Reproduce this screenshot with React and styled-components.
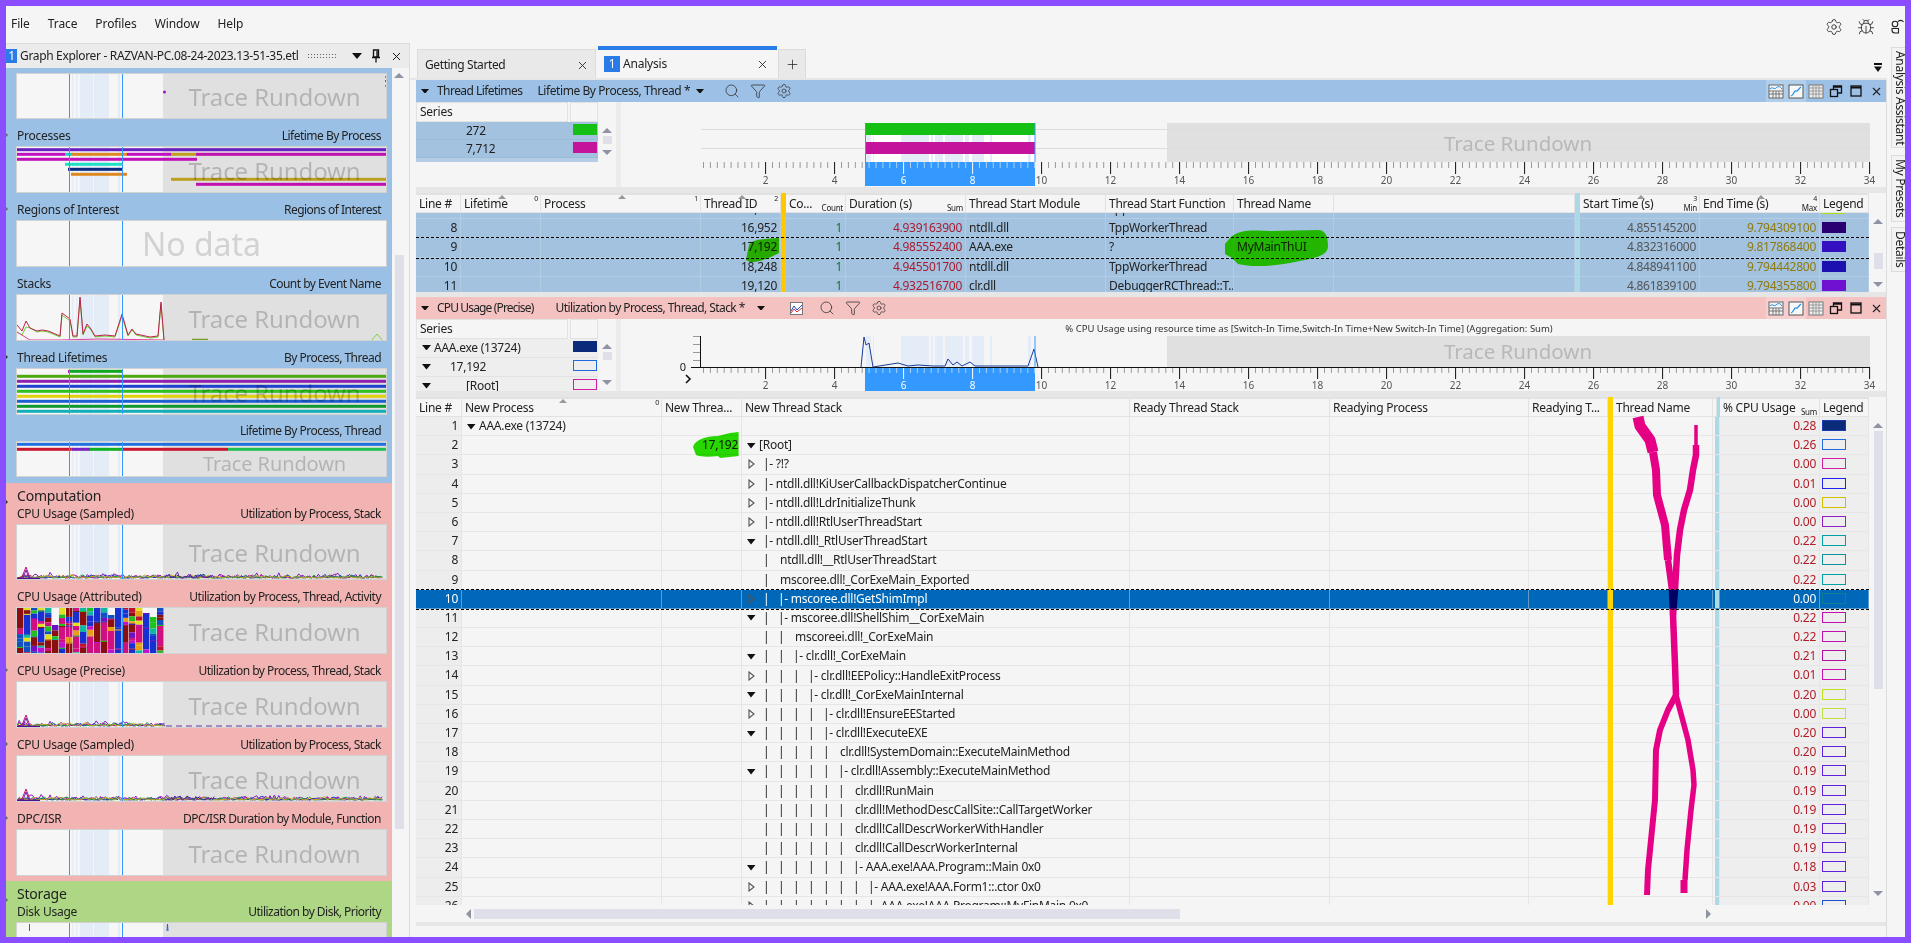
import React from 'react';
import styled, { createGlobalStyle } from 'styled-components';
import { Settings, Bug, Search, Filter, X, Plus } from 'lucide-react';

const Global = createGlobalStyle`
  html, body { margin: 0; padding: 0; background: #f5f5f5; }
  * { box-sizing: border-box; }
`;

const Root = styled.div`
  position: relative;
  width: 1911px; height: 943px;
  border: 6px solid #8a4dff;
  background: #f5f5f5;
  overflow: hidden;
  font: 12px/16px "Noto Sans", "Open Sans", sans-serif;
  letter-spacing: -0.25px;
  color: #222;
  display: flex; flex-direction: column;
`;

const MenuBar = styled.div`
  height: 37px; flex: none;
  display: flex; align-items: center; justify-content: space-between;
  padding: 0 0 2px 5px;
`;
const Menu = styled.div`display: flex; gap: 18px; letter-spacing: -0.1px;`;
const TopIcons = styled.div`display: flex; gap: 14px; margin: 7px -2px 0 0; color: #222; align-items: center;`;

const Body = styled.div`flex: 1; min-height: 0; display: flex;`;

/* left panel */
const LeftPanel = styled.div`
  width: 404px; flex: none; display: flex; flex-direction: column;
  border-right: 1px solid #dcdcdc;
`;
const PanelTitle = styled.div`
  height: 25px; flex: none; background: #ebebeb; border-top: 1px solid #dcdcdc;
  display: flex; align-items: center; font-size: 12px; letter-spacing: -0.33px;
`;
const Badge = styled.span`
  background: #2a7ae8; color: #fff; display: flex; align-items: center; justify-content: center;
  width: ${p => p.$w || 16}px; height: ${p => p.$h || 16}px; flex: none;
`;
const TitleText = styled.span`margin-left: 3px; white-space: nowrap;`;
const Grip = styled.span`
  width: 30px; height: 6px; margin-left: 8px; flex: none;
  background-image: radial-gradient(#666 0.7px, transparent 0.8px);
  background-size: 3px 3px;
`;
const TitleBtns = styled.div`
  margin-left: auto; display: flex; align-items: center; gap: 9px; padding-right: 6px; color: #111;
`;
const PanelBody = styled.div`flex: 1; min-height: 0; display: flex;`;
const List = styled.div`width: 386px; flex: none; overflow: hidden;`;
const Group = styled.div`
  background: ${p => p.$bg};
  padding: ${p => p.$pt}px 0 ${p => p.$pb}px;
`;
const GroupTitle = styled.div`
  font-size: 14px; line-height: 19px; height: 19px; padding-left: 11px; letter-spacing: -0.2px;
`;
const Entry = styled.div`position: relative;`;
const Mark = styled.i`
  position: absolute; left: 0; top: 14px; width: 0; height: 0;
  border-top: 2px solid transparent; border-bottom: 2px solid transparent;
  border-left: 2px solid ${p => p.$c || '#667'};
`;
const EntryLabel = styled.div`
  height: ${p => p.$h}px; display: flex; justify-content: space-between; align-items: flex-end;
  padding: 0 5px 1px 11px; line-height: 18px; white-space: nowrap;
`;
const EntryRight = styled.span`letter-spacing: -0.52px; padding-right: 6px;`;
const Thumb = styled.div`
  position: relative; height: ${p => p.$h}px; margin: 0 5px 0 10px;
  border: 1px solid #d2d2d2; display: flex; overflow: hidden; background: #f6f6f6;
`;
const ThumbGray = styled.div`
  width: 223px; margin-left: auto; background: #e0e0e0;
  display: flex; align-items: center; justify-content: center;
`;
const ThumbEmpty = styled.div`
  flex: 1; display: flex; align-items: center; justify-content: center;
  font-size: 32px; color: #d2d2d2; position: relative; z-index: 2; letter-spacing: 0;
  line-height: 1;
`;
const RundownText = styled.span`
  position: relative; z-index: 2;
  font-size: ${p => p.$s || 24}px; color: rgba(0,0,0,.2); line-height: 1; white-space: nowrap; letter-spacing: -0.1px;
  margin-top: ${p => p.$mt ?? 2}px;
`;
const ThumbPlot = styled.svg`
  position: absolute; left: -1px; top: -1px; z-index: 1; display: block;
`;
const LeftScroll = styled.div`
  flex: 1; display: flex; flex-direction: column; align-items: center; padding-top: 5px; padding-right: 3px;
`;
const ArrowUp = styled.i`
  display: block; width: 0; height: 0; flex: none;
  border-left: 5px solid transparent; border-right: 5px solid transparent;
  border-bottom: 5px solid #8f93a3;
`;
const ArrowDown = styled(ArrowUp)`
  border-bottom: 0; border-top: 5px solid #8f93a3; margin-top: ${p => p.$mt}px;
`;
const ArrowLeft = styled.i`
  display: block; width: 0; height: 0; flex: none;
  border-top: 5px solid transparent; border-bottom: 5px solid transparent;
  border-right: 5px solid #8f93a3;
`;
const ArrowRight = styled(ArrowLeft)`
  border-right: 0; border-left: 5px solid #8f93a3;
`;
const VThumb = styled.div`
  flex: none; width: 9px; background: #dedfe8; height: ${p => p.$h}px; margin-top: ${p => p.$mt}px;
`;

/* main */
const Main = styled.div`
  flex: 1; min-width: 0; display: flex; flex-direction: column;
`;
const TabStrip = styled.div`
  height: 35px; flex: none; display: flex; align-items: flex-end; padding-left: 7px; gap: 2px;
`;
const Tab = styled.div`
  height: 29px; width: 179px; background: #e9e9e9; border: 1px solid #dcdcdc; border-bottom: 0;
  display: flex; align-items: center; padding: 2px 6px 0 7px; justify-content: space-between; font-size: 12px; letter-spacing: -0.4px;
`;
const ActiveTab = styled.div`
  height: 32px; width: 179px; background: #f5f5f5; border-top: 4px solid #2a7ae8;
  display: flex; align-items: center; padding: 0 8px 0 6px; gap: 3px; letter-spacing: -0.2px;
`;
const PlusTab = styled(Tab)`width: 28px; padding: 0; justify-content: center; margin-left: -1px;`;
const TabClose = styled.span`margin-left: auto; display: flex;`;
const Overflow = styled.div`
  margin-left: auto; margin-right: 1px; align-self: center; padding-top: 16px; width: 12px;
`;
const Rule = styled.div`height: ${p => p.$h}px; flex: none; background: #e6e6e6;`;
const Analysis = styled.div`
  flex: 1; min-height: 0; display: flex; flex-direction: column; padding-left: 6px;
  border-right: 1px solid #dddddd;
`;
const PaneHeader = styled.div`
  height: 22px; flex: none; background: ${p => p.$bg};
  display: flex; align-items: center; padding-left: 5px;
`;
const PaneTitle = styled.span`margin-left: 8px; white-space: nowrap; letter-spacing: ${p => p.$ls}px;`;
const PaneSub = styled.span`margin-left: ${p => p.$ml}px; white-space: nowrap; letter-spacing: ${p => p.$ls}px;`;
const Dropdown = styled.span`margin-left: ${p => p.$ml}px; display: flex;`;
const HeaderTools = styled.div`
  display: flex; align-items: center; margin-left: ${p => p.$ml}px; gap: 10px; color: #333;
`;
const ChartTool = styled.span`display: flex; margin-right: 6px;`;
const HeaderRight = styled.div`margin-left: auto; display: flex; height: 100%;`;
const HeaderBtn = styled.div`
  width: 20px; height: 100%; display: flex; align-items: center; justify-content: center;
  background: ${p => p.$on ? 'rgba(255,255,255,.22)' : 'transparent'};
`;
const ChartRow = styled.div`
  height: ${p => p.$h}px; flex: none; display: flex; overflow: hidden;
`;
const SeriesBox = styled.div`width: 182px; flex: none; overflow: hidden; position: relative;`;
const SeriesHead = styled.div`
  display: grid; grid-template-columns: 152px 2px 28px; height: 20px; line-height: 18px;
`;
const SeriesHeadCell = styled.div`background: #f5f5f5; border: 1px solid #e2e2e2; padding-left: 3px;`;
const SeriesRow = styled.div`
  display: grid; grid-template-columns: 154px 28px; height: ${p => p.$h || 19.2}px;
  background: ${p => p.$sel ? '#a2c2df' : '#eeeeee'};
  border-bottom: 1px solid ${p => p.$sel ? '#9bbcd9' : '#e2e2e2'};
`;
const SeriesName = styled.div`
  display: flex; align-items: center; padding-left: ${p => p.$pl}px; position: relative; white-space: nowrap;
`;
const SeriesExp = styled.span`position: absolute; left: 6px; top: 6px; display: flex;`;
const SeriesSwatch = styled.span`
  display: block; margin: 2px 3px; height: 11px; width: 24px; flex: none;
  background: ${p => p.$fill || 'transparent'};
  border: 1px solid ${p => p.$c};
`;
const SeriesTail = styled.div`height: 4px; background: #b3cde4;`;
const MiniScroll = styled.div`
  width: 18px; flex: none; display: flex; flex-direction: column; align-items: center; padding-top: ${p => p.$pt}px;
`;
const Divider = styled.div`width: 5px; flex: none; background: #ececec;`;
const Plot = styled.svg`display: block; flex: none;`;

const TableWrap = styled.div`
  flex: ${p => p.$grow ? 1 : 'none'}; min-height: 0; display: flex; flex-direction: column;
  height: ${p => p.$h ? `${p.$h}px` : 'auto'};
`;
const TableMain = styled.div`flex: 1; min-height: 0; display: flex;`;
const TableCol = styled.div`width: 1453px; flex: none; display: flex; flex-direction: column; min-height: 0;`;
const HeadRow = styled.div`
  height: 20px; flex: none; display: grid; grid-template-columns: ${p => p.$cols};
  font-size: 12px;
`;
const HeadCell = styled.div`
  position: relative; background: #f5f5f5; border: 1px solid #e2e2e2; border-left: 0; border-top: 2px solid #e2e2e2;
  padding-left: 3px; line-height: 17px; white-space: nowrap; overflow: hidden;
`;
const BarCell = styled.div`background: ${p => p.$c};`;
const Caret = styled.i`
  position: absolute; top: 0; left: 50%; margin-left: -3px; width: 0; height: 0;
  border-left: 4px solid transparent; border-right: 4px solid transparent; border-bottom: 4px solid #999;
`;
const SortNo = styled.span`position: absolute; top: 0; right: 2px; font-size: 7px; line-height: 8px;`;
const Agg = styled.span`position: absolute; bottom: 0; right: 2px; font-size: 8px; line-height: 9px;`;
const Rows = styled.div`flex: 1; min-height: 0; overflow: hidden;`;
const RowsInner = styled.div`margin-top: ${p => p.$mt || 0}px;`;
const TableRow = styled.div`
  height: 19.2px; display: grid; grid-template-columns: ${p => p.$cols};
  position: relative; line-height: 18px;
  background: ${p => p.$bg || 'transparent'};
  color: ${p => p.$inv ? '#fff' : '#222'};
  ${p => p.$dash ? `
    &::before, &::after { content: ''; position: absolute; left: 0; right: 0; border-top: 1px dashed #000; z-index: 2; }
    &::before { top: -1px; } &::after { bottom: -1px; }
  ` : ''}
`;
const Cell = styled.div`
  border-right: 1px solid ${p => p.$line};
  border-bottom: 1px solid ${p => p.$line};
  padding: 0 ${p => p.$tight ? 0 : 3}px 0 3px; white-space: nowrap; overflow: hidden;
  text-align: ${p => p.$right ? 'right' : 'left'};
  color: ${p => p.$c || 'inherit'};
  background: ${p => p.$bg || 'transparent'};
  display: ${p => p.$flex ? 'flex' : 'block'};
  align-items: center;
  position: relative;
`;
const LegendSwatch = styled.span`
  display: block; width: 24px; height: 11px; margin: 3px 0 0 -1px;
  background: ${p => p.$fill || 'transparent'};
  border: 1px solid ${p => p.$c};
`;
const Guide = styled.span`display: inline-block; width: 15px; flex: none;`;
const TreeGutter = styled.span`width: 18px; flex: none; display: flex; align-items: center; padding-left: ${p => p.$closed ? 3 : 1}px;`;
const Dashed = styled.span`white-space: pre;`;
const PlainNode = styled.span`margin-left: 2px;`;
const RootNode = styled.span`margin-left: -4px;`;
const NameExp = styled.span`display: inline-flex; margin: 0 3px 0 1px;`;
const HBar = styled.div`
  height: 17px; flex: none; display: flex; align-items: center; padding-left: 50px; width: 1295px;
`;
const HThumb = styled.div`width: 706px; height: 10px; background: #dedfe8; margin-left: 3px;`;
const HEnd = styled.div`margin-left: auto;`;
const BottomPad = styled.div`flex: none; height: 11px;`;

const Rail = styled.div`width: 18px; flex: none; padding-top: 4px; display: flex; flex-direction: column; overflow: hidden;`;
const RailTab = styled.div`
  writing-mode: vertical-rl; height: ${p => p.$h}px; width: 18px; margin: 0 0 ${p => p.$mb}px 4px; flex: none;
  background: #f3f3f3; border: 1px solid #dcdcdc; border-right: 0;
  line-height: 17px; padding-top: 3px; white-space: nowrap; letter-spacing: -0.3px; overflow: hidden;
`;
const Scribble = styled.svg`
  position: absolute; left: 0; top: 0; z-index: 5; pointer-events: none; mix-blend-mode: multiply;
`;
const SvgText = styled.text`font-family: "Noto Sans", sans-serif; letter-spacing: 0;`;

/* ---- icons ---- */
const Tri = ({ s = 9, c = '#111' }) => (
  <svg width={s} height={s * 0.6} viewBox="0 0 10 6"><path d="M0 0H10L5 6Z" fill={c} /></svg>
);
const Open = () => <svg width="10" height="7" viewBox="0 0 10 7"><path d="M1 1H9.5L5 6.5Z" fill="#111" /></svg>;
const Closed = () => <svg width="7" height="10" viewBox="0 0 7 10"><path d="M1 1L6 5L1 9Z" fill="none" stroke="#555" strokeWidth="1.1" /></svg>;
const TableChartIcon = ({ accent }) => (
  <svg width="16" height="16" viewBox="0 0 16 16" fill="none">
    <rect x="1" y="2" width="14" height="13" fill="#f4f4f4" stroke="#666" />
    {[8, 11].map(y => <path key={y} d={`M1 ${y}H15`} stroke="#777" />)}
    {[5, 8, 11].map(x => <path key={x} d={`M${x} 8V15`} stroke="#777" />)}
    <path d="M2 6C4 3 6 7 8 5S12 3 14 6" stroke={accent} />
  </svg>
);
const GraphIcon = () => (
  <svg width="16" height="16" viewBox="0 0 16 16" fill="none">
    <rect x="1" y="2" width="14" height="13" fill="#f8f8f8" stroke="#555" />
    <path d="M3 13C6 12 6 7 8 8S11 5 13 4" stroke="#1a8be0" strokeWidth="1.2" />
  </svg>
);
const GridIcon = () => (
  <svg width="16" height="16" viewBox="0 0 16 16" fill="none">
    <rect x="1" y="2" width="14" height="13" fill="#f0f0f0" stroke="#777" />
    {[5, 8, 11].map(y => <path key={y} d={`M1 ${y}H15`} stroke="#999" />)}
    {[5, 8, 11].map(x => <path key={x} d={`M${x} 2V15`} stroke="#999" />)}
  </svg>
);
const RestoreIcon = () => (
  <svg width="14" height="14" viewBox="0 0 14 14" fill="none" stroke="#111" strokeWidth="1.3">
    <rect x="1.5" y="5.5" width="7" height="7" /><path d="M4.5 5.5V2H12.5V9H8.5M4.5 3H12.5" />
  </svg>
);
const MaxIcon = () => (
  <svg width="14" height="14" viewBox="0 0 14 14" fill="none" stroke="#111" strokeWidth="1.3">
    <rect x="2" y="2" width="10" height="10" /><path d="M2 3.5H12" strokeWidth="2" />
  </svg>
);
const CpuChartIcon = () => (
  <svg width="13" height="13" viewBox="0 0 13 13" fill="none">
    <rect x="0.5" y="0.5" width="12" height="12" fill="#fff" stroke="#777" />
    <path d="M1 9L4 4L7 8L12 3" stroke="#2050d0" /><path d="M1 11L4 7L7 10L12 6" stroke="#d03040" />
  </svg>
);
const PinIcon = () => (
  <svg width="10" height="14" viewBox="0 0 10 14" fill="none" stroke="#111" strokeWidth="1.3">
    <path d="M2.5 1H7.5V8H2.5ZM1 8.5H9M5 8.5V13.5M6 2V8" />
  </svg>
);
const FeedbackIcon = () => (
  <svg width="18" height="18" viewBox="0 0 18 18" fill="none" stroke="#222" strokeWidth="1.1">
    <circle cx="6" cy="6" r="2.8" /><path d="M3 10.5H9.5V15H6A3 3 0 0 1 3 12ZM9 3.5C11 2 13 2 14.5 4" />
  </svg>
);
const OverflowIcon = () => (
  <svg width="8" height="10" viewBox="0 0 8 10"><path d="M0 0H8V2H0ZM0 3.5H8L4 9Z" fill="#111" /></svg>
);

/* ---- thumbnail drawings ---- */
const rng = seed => () => (seed = (seed * 16807) % 2147483647) / 2147483647;
const BLUE_LINE = '#3399ff';
const bandsList = [[72, 1.5], [76, 1.5], [80, 13], [94, 14], [103, 6], [118, 2], [90, 1]];

const Bars = ({ rows }) => rows.map((r, i) => (
  <rect key={i} x={r[1]} width={r[2] - r[1]} y={r[0] - 1.5} height="3" fill={r[3]} />
));

const noise = (seed, x0, x1, base, amp, step = 2.2) => {
  const r = rng(seed);
  const p = [];
  for (let x = x0; x < x1; x += step) p.push(`${x.toFixed(1)},${(base - r() * r() * amp).toFixed(1)}`);
  return p.join(' ');
};

const Noise = ({ top, h, x1 = 384, big = true, seed = 11 }) => {
  const base = top + h - 2;
  const colors = ['#8b16c0', '#c010a0', '#2030d0', '#20a040', '#c8b020'];
  return (
    <g fill="none" strokeWidth="1">
      <path d={`M17 ${base - 0.5}H${x1}`} stroke="#5a2a90" strokeWidth="1.2" strokeDasharray="5 3" />
      {colors.map((c, i) => (
        <polyline key={c} points={noise(seed + i * 37, 17, x1, base, i === 0 ? 6 : 4)} stroke={c} />
      ))}
      {big && <polyline points={noise(seed + 3, 165, 215, base, 7, 1.4)} stroke="#5020a0" />}
      <polyline points={`18,${base} 22,${base - 1} 26,${base - 11} 30,${base}`} stroke="#c01070" />
      <polyline points={`19,${base} 23,${base} 26,${base - 8} 29,${base}`} stroke="#7020c0" />
      <path d={`M17 ${base + 0.5}H40`} stroke="#501090" strokeWidth="1.5" />
    </g>
  );
};

const Attributed = () => {
  const r = rng(4242);
  const pal = ['#c010d0', '#1830d0', '#8a1010', '#10b8a0', '#e0e020', '#20c020', '#d01080', '#e8a010', '#c01030', '#7010c0', '#1050c0'];
  const tops = [0, 0, 0, 0, 0, 18, 0, 0, 0, 0, 0, 0, 0, 8, 0, 0, 0, 0, 6, 10, 0];
  const out = [];
  tops.forEach((t, i) => {
    const x = 17 + i * 7.0;
    let y = 609 + t;
    while (y < 656) {
      const big = r() < 0.22;
      const h = big ? 8 + r() * 14 : 2 + r() * 4;
      const c = big ? pal[[1, 2, 2, 1, 6][Math.floor(r() * 5)]] : pal[Math.floor(r() * pal.length)];
      out.push(<rect key={`${i}-${y}`} x={x} y={y} width={6.4} height={Math.min(h, 656 - y)} fill={c} />);
      if (big) out.push(<rect key={`f${i}-${y}`} x={x} y={y} width={6.4} height={1} fill={pal[Math.floor(r() * pal.length)]} />);
      y += h;
    }
  });
  return <g>{out}</g>;
};

const redLine = '17,326 22,332 26,322 30,329 37,332 42,331 48,332 53,334 60,337 62,314 70,320 73,337 77,337 80,298 83,335 87,325 91,330 95,337 105,336 115,337 122,315 128,336 132,330 136,335 150,338 158,337 161,303 164,341';
const greenLine = '17,333 22,336 26,328 30,329 37,333 42,332 48,333 53,335 60,338 62,316 70,322 73,338 77,338 80,300 83,336 87,327 91,331 95,338 105,337 115,338 122,317 128,337 132,331 136,336 150,339 158,338 161,305 164,342';

const drawings = {
  dot: () => (
    <g><circle cx="164.5" cy="92" r="1.6" fill="#9a20c8" />
      <path d="M385.5 76v2" stroke="#c08020" /><path d="M385.5 80v2" stroke="#c04040" /><path d="M385.5 85v2" stroke="#20c0a0" /></g>
  ),
  processes: () => <Bars rows={[
    [150.7, 17, 386, '#6a20c0'],
    [155.3, 17, 65, '#c010c0'], [155.3, 65, 71, '#20d0c0'], [155.3, 71, 127, '#e08820'], [155.3, 127, 171, '#c010c0'], [155.3, 171, 196, '#c0a020'], [155.3, 196, 386, '#c010b0'],
    [160.3, 17, 197, '#c010b8'], [165.3, 65, 122, '#20e0c8'], [170.3, 68, 122, '#0a2a80'], [175.3, 71, 127, '#e08820'],
    [180.3, 171, 386, '#bca020'], [185.3, 196, 386, '#c010b0'],
  ]} />,
  stacks: () => (
    <g fill="none">
      <polyline points={greenLine} stroke="#70d030" />
      <polyline points={redLine} stroke="#c02050" />
      <polyline points="17,333 30,341 60,341 100,340 164,341" stroke="#e040a0" />
      <path d="M192 340.5H208" stroke="#70a020" strokeWidth="1.5" />
      <path d="M372 341L377 335L382 341" stroke="#80d040" />
    </g>
  ),
  threads: () => (
    <g>
      <rect x="68" y="371" width="2" height="3" fill="#c010c0" />
      <Bars rows={[
        [372.3, 70, 122, '#10a820'], [377.3, 17, 386, '#50a810'], [382.3, 17, 386, '#9020b0'], [387.3, 17, 386, '#2040d0'],
        [392.3, 17, 386, '#30c020'], [397.3, 17, 386, '#e0d010'], [402.3, 17, 386, '#2060d0'], [407.3, 17, 386, '#109830'], [412.3, 17, 386, '#10b0b8'],
      ]} />
    </g>
  ),
  lifetime: () => <Bars rows={[
    [445.3, 17, 386, '#2070e0'],
    [450.3, 17, 71, '#c81830'], [450.3, 71, 72, '#10b020'], [450.3, 72, 90, '#7a20c0'], [450.3, 90, 122, '#10b020'], [450.3, 123, 228, '#c81830'], [450.3, 228, 386, '#20c050'],
  ]} />,
  cpu1: (t, h) => <Noise top={t} h={h} seed={101} />,
  cpu2: (t, h) => <Noise top={t} h={h} seed={202} />,
  precise: (t, h) => (
    <g>
      <Noise top={t} h={h} x1={165} big={false} seed={303} />
      <path d={`M166 ${t + h - 2}H382`} stroke="#7030a0" strokeDasharray="6 4" />
    </g>
  ),
  attributed: () => <Attributed />,
  disk: () => (
    <g fill="none" stroke="#3060c0"><path d="M29.5 933V926" /><path d="M167 933L167.5 926L168 933" /></g>
  ),
};

const ThumbView = ({ top, h, kind, empty, rundownSize, rundownMt }) => {
  const draw = kind && drawings[kind];
  return (
    <Thumb $h={h}>
      {empty ? <ThumbEmpty>No data</ThumbEmpty> : (
        <ThumbGray><RundownText $s={rundownSize} $mt={rundownMt}>Trace Rundown</RundownText></ThumbGray>
      )}
      <ThumbPlot width="371" height={h} viewBox={`16 ${top} 371 ${h}`}>
        {!empty && bandsList.map(([x, w]) => <rect key={x} x={x} y={top} width={w} height={h} fill="#e4edf7" />)}
        {draw && draw(top, h)}
        <path d={`M69.5 ${top}V${top + h}M122.5 ${top}V${top + h}`} stroke={BLUE_LINE} />
      </ThumbPlot>
    </Thumb>
  );
};

const blueEntries = [
  { label: 'Processes', right: 'Lifetime By Process', top: 147, h: 47, kind: 'processes', mark: true },
  { label: 'Regions of Interest', right: 'Regions of Interest', top: 221, h: 47, empty: true, mark: true },
  { label: 'Stacks', right: 'Count by Event Name', top: 295, h: 47, kind: 'stacks' },
  { label: 'Thread Lifetimes', right: 'By Process, Thread', top: 369, h: 47, kind: 'threads', mark: '#333' },
  { label: '', right: 'Lifetime By Process, Thread', top: 442, h: 36, kind: 'lifetime', rundownSize: 20, rundownMt: 9, lh: 26 },
];
const pinkEntries = [
  { label: 'CPU Usage (Attributed)', right: 'Utilization by Process, Thread, Activity', top: 609, h: 47, kind: 'attributed' },
  { label: 'CPU Usage (Precise)', right: 'Utilization by Process, Thread, Stack', top: 683, h: 47, kind: 'precise', mark: true },
  { label: 'CPU Usage (Sampled)', right: 'Utilization by Process, Stack', top: 757, h: 47, kind: 'cpu2', mark: true },
  { label: 'DPC/ISR', right: 'DPC/ISR Duration by Module, Function', top: 831, h: 47, mark: true },
];

const EntryView = ({ e }) => (
  <Entry>
    {e.mark && <Mark $c={e.mark === true ? undefined : e.mark} />}
    <EntryLabel $h={e.lh || 27}><span>{e.label}</span><EntryRight>{e.right}</EntryRight></EntryLabel>
    <ThumbView {...e} />
  </Entry>
);

/* ---- plots ---- */
const axisTicks = y => {
  const out = [];
  for (let i = 0; i <= 170; i++) {
    const x = 696.6 + i * 6.9;
    if (x < 701) continue;
    const major = i % 10 === 0;
    const inSel = x > 865 && x < 1035;
    out.push(<path key={i} d={`M${x.toFixed(1)} ${y}V${y + (major ? 12 : 6)}`}
      stroke={major ? (inSel ? '#fff' : '#111') : (inSel ? '#a8d0f8' : '#999')} />);
    if (major) {
      const v = i / 5;
      out.push(<SvgText key={`t${i}`} x={x} y={y + 22} fontSize="10" textAnchor="middle" fill={inSel ? '#fff' : '#555'}>{v}</SvgText>);
    }
  }
  return out;
};
const plotBands = [[866, 5], [873, 1], [901, 28], [931, 2], [935, 8], [945, 18], [965, 4], [972, 12], [990, 2], [1028, 3]];

const LifetimePlot = () => (
  <Plot width="1266" height="85" viewBox="621 102 1266 85">
    <rect x="865" y="123" width="170" height="39" fill="#fff" />
    {plotBands.map(([x, w]) => <rect key={x} x={x} y="123" width={w} height="39" fill="#e4edf7" />)}
    <rect x="1167" y="123" width="703" height="39" fill="#e0e0e0" />
    <path d="M701 129.5H865M1035 129.5H1870M701 148.5H865M1035 148.5H1870" stroke="#dcdcdc" />
    <rect x="865" y="123" width="170" height="12" fill="#14c014" />
    <rect x="865" y="142" width="170" height="12" fill="#c4149c" />
    <path d="M865.5 123V162M1035 123V162" stroke={BLUE_LINE} />
    <rect x="865" y="162" width="170" height="24" fill={BLUE_LINE} />
    {axisTicks(162)}
    <SvgText x="1518" y="151" fontSize="20.5" textAnchor="middle" fill="#b8b8b8">Trace Rundown</SvgText>
  </Plot>
);

const CpuPlot = () => (
  <Plot width="1266" height="72" viewBox="621 319 1266 72">
    <SvgText x="1309" y="332" fontSize="9.5" textAnchor="middle" fill="#333">% CPU Usage using resource time as [Switch-In Time,Switch-In Time+New Switch-In Time] (Aggregation: Sum)</SvgText>
    {plotBands.map(([x, w]) => <rect key={x} x={x} y="336" width={w} height="31" fill="#e4edf7" />)}
    <rect x="1167" y="336" width="703" height="31" fill="#e0e0e0" />
    <SvgText x="1518" y="359" fontSize="20.5" textAnchor="middle" fill="#b8b8b8">Trace Rundown</SvgText>
    <rect x="865" y="367" width="170" height="24" fill={BLUE_LINE} />
    {axisTicks(367)}
    <path d="M691 367.5H1870M700.5 336V367" stroke="#111" />
    <path d="M693 336.5H700M693 344.5H700M693 352.5H700M693 360.5H700" stroke="#999" />
    <SvgText x="683" y="371" fontSize="11" textAnchor="middle" fill="#222">0</SvgText>
    <path d="M686 375L690 379L686 383" fill="none" stroke="#111" strokeWidth="1.6" />
    <polyline fill="none" stroke="#1a3a9a" points="861,367 864,337 866,345 869,343 873,367 898,363 908,366 918,365 933,366 945,366 948,359 953,365 957,362 962,366 970,362 975,366 1028,366 1034,349 1038,367" />
    <path d="M1035 336V367" stroke={BLUE_LINE} />
  </Plot>
);

/* ---- table data ---- */
const LIFE_COLS = '45px 80px 160px 80px 5px 60px 120px 140px 128px 100px 241px 5px 120px 120px 49px';
const CPU_COLS = '46px 200px 80px 388px 200px 199px 79px 5px 100px 2px 5px 100px 49px';
const LINE = '#b2cce4';

const lifeRows = [
  { n: 7, id: '15,908', d: '4.941592200', m: 'ntdll.dll', f: 'TppWorkerThread', s: '4.853354200', e: '9.794947400', c: '#b0e010' },
  { n: 8, id: '16,952', d: '4.939163900', m: 'ntdll.dll', f: 'TppWorkerThread', s: '4.855145200', e: '9.794309100', c: '#2a0070' },
  { n: 9, id: '17,192', d: '4.985552400', m: 'AAA.exe', f: '?', name: 'MyMainThUI', s: '4.832316000', e: '9.817868400', c: '#3410c0', dash: true },
  { n: 10, id: '18,248', d: '4.945501700', m: 'ntdll.dll', f: 'TppWorkerThread', s: '4.848941100', e: '9.794442800', c: '#1c10b0' },
  { n: 11, id: '19,120', d: '4.932516700', m: 'clr.dll', f: 'DebuggerRCThread::T...', s: '4.861839100', e: '9.794355800', c: '#7010d0' },
];

const stack = [
  { g: 0, root: true, exp: 'open', t: '[Root]', v: '0.26', c: '#1e6ae0' },
  { g: 0, dash: 1, exp: 'closed', t: '?!?', v: '0.00', c: '#d020a0' },
  { g: 0, dash: 1, exp: 'closed', t: 'ntdll.dll!KiUserCallbackDispatcherContinue', v: '0.01', c: '#2020f0' },
  { g: 0, dash: 1, exp: 'closed', t: 'ntdll.dll!LdrInitializeThunk', v: '0.00', c: '#d0c000' },
  { g: 0, dash: 1, exp: 'closed', t: 'ntdll.dll!RtlUserThreadStart', v: '0.00', c: '#9020c0' },
  { g: 0, dash: 1, exp: 'open', t: 'ntdll.dll!_RtlUserThreadStart', v: '0.22', c: '#00a0a8' },
  { g: 1, t: 'ntdll.dll!__RtlUserThreadStart', v: '0.22', c: '#109098' },
  { g: 1, t: 'mscoree.dll!_CorExeMain_Exported', v: '0.22', c: '#00a0a8' },
  { g: 1, dash: 1, exp: 'closed', t: 'mscoree.dll!GetShimImpl', v: '0.00', c: '#108090', sel: true },
  { g: 1, dash: 1, exp: 'open', t: 'mscoree.dll!ShellShim__CorExeMain', v: '0.22', c: '#c010b0' },
  { g: 2, t: 'mscoreei.dll!_CorExeMain', v: '0.22', c: '#c010b0' },
  { g: 2, dash: 1, exp: 'open', t: 'clr.dll!_CorExeMain', v: '0.21', c: '#b010a0' },
  { g: 3, dash: 1, exp: 'closed', t: 'clr.dll!EEPolicy::HandleExitProcess', v: '0.01', c: '#c810b0' },
  { g: 3, dash: 1, exp: 'open', t: 'clr.dll!_CorExeMainInternal', v: '0.20', c: '#c0e020' },
  { g: 4, dash: 1, exp: 'closed', t: 'clr.dll!EnsureEEStarted', v: '0.00', c: '#c0e040' },
  { g: 4, dash: 1, exp: 'open', t: 'clr.dll!ExecuteEXE', v: '0.20', c: '#6020e0' },
  { g: 5, t: 'clr.dll!SystemDomain::ExecuteMainMethod', v: '0.20', c: '#6020e0' },
  { g: 5, dash: 1, exp: 'open', t: 'clr.dll!Assembly::ExecuteMainMethod', v: '0.19', c: '#6020e0' },
  { g: 6, t: 'clr.dll!RunMain', v: '0.19', c: '#6020e0' },
  { g: 6, t: 'clr.dll!MethodDescCallSite::CallTargetWorker', v: '0.19', c: '#6020e0' },
  { g: 6, t: 'clr.dll!CallDescrWorkerWithHandler', v: '0.19', c: '#6020e0' },
  { g: 6, t: 'clr.dll!CallDescrWorkerInternal', v: '0.19', c: '#6020e0' },
  { g: 6, dash: 1, exp: 'open', t: 'AAA.exe!AAA.Program::Main 0x0', v: '0.18', c: '#6020e0' },
  { g: 7, dash: 1, exp: 'closed', t: 'AAA.exe!AAA.Form1::.ctor 0x0', v: '0.03', c: '#6020e0' },
  { g: 7, dash: 1, exp: 'closed', t: 'AAA.exe!AAA.Program::MyFinMain 0x0', v: '0.00', c: '#1a50d0' },
];

const Head = ({ children, caret, no, agg }) => (
  <HeadCell>
    {children}
    {caret && <Caret />}
    {no !== undefined && <SortNo>{no}</SortNo>}
    {agg && <Agg>{agg}</Agg>}
  </HeadCell>
);

const StackRow = ({ r, line }) => {
  const L = r.sel ? '#5f9bcc' : '#e6e6e6';
  const gray = r.sel ? 'transparent' : '#ededed';
  const side = r.sel ? 'transparent' : '#eeeeee';
  return (
    <TableRow $cols={CPU_COLS} $bg={r.sel ? '#0068b8' : undefined} $inv={r.sel} $dash={r.sel}>
      <Cell $line={L} $right $bg={gray}>{line}</Cell>
      <Cell $line={L} />
      <Cell $line={L} $right>{line === 2 ? '17,192' : ''}</Cell>
      <Cell $line={L} $flex>
        <TreeGutter $closed={r.exp === 'closed'}>{r.exp === 'open' ? <Open /> : r.exp === 'closed' ? <Closed /> : null}</TreeGutter>
        {r.root ? <RootNode>{r.t}</RootNode> : (
          <>
            {Array.from({ length: r.g }, (_, i) => <Guide key={i}>|</Guide>)}
            {r.dash ? <Dashed>|- {r.t}</Dashed> : <PlainNode>{r.t}</PlainNode>}
          </>
        )}
      </Cell>
      <Cell $line={L} /><Cell $line={L} /><Cell $line={L} />
      <BarCell $c="#ffd400" />
      <Cell $line={L} />
      <Cell $line={L} />
      <BarCell $c="#add8e6" />
      <Cell $line={L} $right $bg={side} $c={r.sel ? '#fff' : '#b01c28'}>{r.v}</Cell>
      <Cell $line={L} $bg={side}><LegendSwatch $c={r.c} /></Cell>
    </TableRow>
  );
};

const PaneRightButtons = () => (
  <HeaderRight>
    <HeaderBtn $on><TableChartIcon accent="#1a8be0" /></HeaderBtn>
    <HeaderBtn $on><GraphIcon /></HeaderBtn>
    <HeaderBtn><GridIcon /></HeaderBtn>
    <HeaderBtn><RestoreIcon /></HeaderBtn>
    <HeaderBtn><MaxIcon /></HeaderBtn>
    <HeaderBtn><X size={13} strokeWidth={2} /></HeaderBtn>
  </HeaderRight>
);

export default function App() {
  return (
    <Root>
      <Global />
      <MenuBar>
        <Menu><span>File</span><span>Trace</span><span>Profiles</span><span>Window</span><span>Help</span></Menu>
        <TopIcons>
          <Settings size={18} strokeWidth={1.1} />
          <Bug size={18} strokeWidth={1.1} />
          <FeedbackIcon />
        </TopIcons>
      </MenuBar>
      <Body>
        <LeftPanel>
          <PanelTitle>
            <Badge $w={11} $h={14}>1</Badge>
            <TitleText>Graph Explorer - RAZVAN-PC.08-24-2023.13-51-35.etl</TitleText>
            <Grip />
            <TitleBtns>
              <Tri s={10} />
              <PinIcon />
              <X size={13} strokeWidth={1.8} />
            </TitleBtns>
          </PanelTitle>
          <PanelBody>
            <List>
              <Group $bg="#9bc0e5" $pt={5} $pb={6}>
                <Entry><ThumbView top={73} h={46} kind="dot" /></Entry>
                {blueEntries.map(e => <EntryView key={e.top} e={e} />)}
              </Group>
              <Group $bg="#f2b3b3" $pt={3} $pb={5}>
                <Entry>
                  <Mark $c="#333" />
                  <GroupTitle>Computation</GroupTitle>
                  <EntryLabel $h={19}><span>CPU Usage (Sampled)</span><EntryRight>Utilization by Process, Stack</EntryRight></EntryLabel>
                  <ThumbView top={525} h={56} kind="cpu1" />
                </Entry>
                {pinkEntries.map(e => <EntryView key={e.top} e={e} />)}
              </Group>
              <Group $bg="#add685" $pt={3} $pb={0}>
                <Entry>
                  <Mark />
                  <GroupTitle>Storage</GroupTitle>
                  <EntryLabel $h={19}><span>Disk Usage</span><EntryRight>Utilization by Disk, Priority</EntryRight></EntryLabel>
                  <ThumbView top={924} h={47} kind="disk" />
                </Entry>
              </Group>
            </List>
            <LeftScroll>
              <ArrowUp />
              <VThumb $h={574} $mt={177} />
            </LeftScroll>
          </PanelBody>
        </LeftPanel>

        <Main>
          <TabStrip>
            <Tab>Getting Started<X size={13} strokeWidth={1.6} /></Tab>
            <ActiveTab>
              <Badge>1</Badge>Analysis
              <TabClose><X size={13} strokeWidth={1.6} /></TabClose>
            </ActiveTab>
            <PlusTab><Plus size={15} strokeWidth={1.2} /></PlusTab>
            <Overflow><OverflowIcon /></Overflow>
          </TabStrip>
          <Rule $h={2} />
          <Analysis>
            <PaneHeader $bg="#9cc0e6">
              <Tri s={8} />
              <PaneTitle $ls={-0.55}>Thread Lifetimes</PaneTitle>
              <PaneSub $ml={15} $ls={-0.42}>Lifetime By Process, Thread *</PaneSub>
              <Dropdown $ml={6}><Tri s={8} /></Dropdown>
              <HeaderTools $ml={20}>
                <Search size={16} strokeWidth={1.2} />
                <Filter size={16} strokeWidth={1.2} />
                <Settings size={16} strokeWidth={1.1} />
              </HeaderTools>
              <PaneRightButtons />
            </PaneHeader>
            <ChartRow $h={85}>
              <SeriesBox>
                <SeriesHead><SeriesHeadCell>Series</SeriesHeadCell><span /><SeriesHeadCell /></SeriesHead>
                <SeriesRow $sel $h={18}><SeriesName $pl={50}>272</SeriesName><SeriesSwatch $c="#14c014" $fill="#14c014" /></SeriesRow>
                <SeriesRow $sel $h={18}><SeriesName $pl={50}>7,712</SeriesName><SeriesSwatch $c="#c4149c" $fill="#c4149c" /></SeriesRow>
                <SeriesTail />
              </SeriesBox>
              <MiniScroll $pt={26}>
                <ArrowUp />
                <VThumb $h={8} $mt={3} />
                <ArrowDown $mt={6} />
              </MiniScroll>
              <Divider />
              <LifetimePlot />
            </ChartRow>
            <Rule $h={6} />
            <TableWrap $h={99}>
              <HeadRow $cols={LIFE_COLS}>
                <Head>Line #</Head>
                <Head caret no="0">Lifetime</Head>
                <Head caret no="1">Process</Head>
                <Head caret no="2">Thread ID</Head>
                <BarCell $c="#ffc800" />
                <Head agg="Count">Co...</Head>
                <Head agg="Sum">Duration (s)</Head>
                <Head>Thread Start Module</Head>
                <Head>Thread Start Function</Head>
                <Head>Thread Name</Head>
                <Head />
                <BarCell $c="#add8e6" />
                <Head caret no="3" agg="Min">Start Time (s)</Head>
                <Head caret no="4" agg="Max">End Time (s)</Head>
                <Head>Legend</Head>
              </HeadRow>
              <TableMain>
                <TableCol>
                  <Rows>
                    <RowsInner $mt={-13}>
                      {lifeRows.map(r => (
                        <TableRow key={r.n} $cols={LIFE_COLS} $bg="#a2c2df" $dash={r.dash}>
                          <Cell $line={LINE} $right>{r.n}</Cell>
                          <Cell $line={LINE} />
                          <Cell $line={LINE} />
                          <Cell $line={LINE} $right>{r.id}</Cell>
                          <BarCell $c="#ffc800" />
                          <Cell $line={LINE} $right $c="#107a20">1</Cell>
                          <Cell $line={LINE} $right $c="#a81c30">{r.d}</Cell>
                          <Cell $line={LINE}>{r.m}</Cell>
                          <Cell $line={LINE} $tight>{r.f}</Cell>
                          <Cell $line={LINE}>{r.name}</Cell>
                          <Cell $line={LINE} />
                          <BarCell $c="#add8e6" />
                          <Cell $line={LINE} $right $c="#555">{r.s}</Cell>
                          <Cell $line={LINE} $right $c="#8f7a10">{r.e}</Cell>
                          <Cell $line={LINE}><LegendSwatch $c={r.c} $fill={r.c} /></Cell>
                        </TableRow>
                      ))}
                    </RowsInner>
                  </Rows>
                </TableCol>
                <MiniScroll $pt={6}>
                  <ArrowUp />
                  <VThumb $h={16} $mt={29} />
                  <ArrowDown $mt={13} />
                </MiniScroll>
              </TableMain>
            </TableWrap>
            <Rule $h={5} />
            <PaneHeader $bg="#f5c2c2">
              <Tri s={8} />
              <PaneTitle $ls={-0.85}>CPU Usage (Precise)</PaneTitle>
              <PaneSub $ml={22} $ls={-0.57}>Utilization by Process, Thread, Stack *</PaneSub>
              <Dropdown $ml={12}><Tri s={8} /></Dropdown>
              <HeaderTools $ml={25}>
                <ChartTool><CpuChartIcon /></ChartTool>
                <Search size={16} strokeWidth={1.2} />
                <Filter size={16} strokeWidth={1.2} />
                <Settings size={16} strokeWidth={1.1} />
              </HeaderTools>
              <PaneRightButtons />
            </PaneHeader>
            <ChartRow $h={72}>
              <SeriesBox>
                <SeriesHead><SeriesHeadCell>Series</SeriesHeadCell><span /><SeriesHeadCell /></SeriesHead>
                <SeriesRow><SeriesName $pl={18}><SeriesExp><Tri s={9} /></SeriesExp>AAA.exe (13724)</SeriesName><SeriesSwatch $c="#0a2a7a" $fill="#0a2a7a" /></SeriesRow>
                <SeriesRow><SeriesName $pl={34}><SeriesExp><Tri s={9} /></SeriesExp>17,192</SeriesName><SeriesSwatch $c="#1e6ae0" /></SeriesRow>
                <SeriesRow><SeriesName $pl={50}><SeriesExp><Tri s={9} /></SeriesExp>[Root]</SeriesName><SeriesSwatch $c="#d020a0" /></SeriesRow>
              </SeriesBox>
              <MiniScroll $pt={25}>
                <ArrowUp />
                <VThumb $h={8} $mt={3} />
                <ArrowDown $mt={20} />
              </MiniScroll>
              <Divider />
              <CpuPlot />
            </ChartRow>
            <Rule $h={6} />
            <TableWrap $grow>
              <HeadRow $cols={CPU_COLS}>
                <Head>Line #</Head>
                <Head caret no="0">New Process</Head>
                <Head>New Threa...</Head>
                <Head>New Thread Stack</Head>
                <Head>Ready Thread Stack</Head>
                <Head>Readying Process</Head>
                <Head>Readying T...</Head>
                <BarCell $c="#ffd400" />
                <Head>Thread Name</Head>
                <Head />
                <BarCell $c="#add8e6" />
                <Head agg="Sum">% CPU Usage</Head>
                <Head>Legend</Head>
              </HeadRow>
              <TableMain>
                <TableCol>
                  <Rows>
                    <TableRow $cols={CPU_COLS}>
                      <Cell $line="#e6e6e6" $right $bg="#ededed">1</Cell>
                      <Cell $line="#e6e6e6" $flex><NameExp><Open /></NameExp>AAA.exe (13724)</Cell>
                      <Cell $line="#e6e6e6" />
                      <Cell $line="#e6e6e6" />
                      <Cell $line="#e6e6e6" /><Cell $line="#e6e6e6" /><Cell $line="#e6e6e6" />
                      <BarCell $c="#ffd400" />
                      <Cell $line="#e6e6e6" /><Cell $line="#e6e6e6" />
                      <BarCell $c="#add8e6" />
                      <Cell $line="#e6e6e6" $right $bg="#eeeeee" $c="#b01c28">0.28</Cell>
                      <Cell $line="#e6e6e6" $bg="#eeeeee"><LegendSwatch $c="#1a3ab0" $fill="#0a2a7a" /></Cell>
                    </TableRow>
                    {stack.map((r, i) => <StackRow key={i} r={r} line={i + 2} />)}
                  </Rows>
                  <HBar>
                    <ArrowLeft />
                    <HThumb />
                    <HEnd><ArrowRight /></HEnd>
                  </HBar>
                </TableCol>
                <MiniScroll $pt={6}>
                  <ArrowUp />
                  <VThumb $h={258} $mt={3} />
                  <ArrowDown $mt={202} />
                </MiniScroll>
              </TableMain>
              <Rule $h={4} />
              <BottomPad />
            </TableWrap>
          </Analysis>
        </Main>

        <Rail>
          <RailTab $h={101} $mb={7}>Analysis Assistant</RailTab>
          <RailTab $h={67} $mb={5}>My Presets</RailTab>
          <RailTab $h={45} $mb={0}>Details</RailTab>
        </Rail>
      </Body>

      <Scribble width="1899" height="931" viewBox="6 6 1899 931">
        <g fill="#36f000">
          <path d="M749 245C752 240 760 239 779 238V253C770 258 760 262 750 262L746 260Z" fill="#3ce000" />
          <path d="M1225 244L1230 238C1238 230 1250 230 1270 231L1318 230C1325 230 1328 236 1328 246C1328 256 1315 258 1295 262C1270 267 1250 267 1238 264L1232 258L1225 254Z" />
          <path d="M693 447C695 440 705 436 718 436L730 433L738.6 432V456L720 458L718 456C710 457 700 457 696 455Z" fill="#2ae000" />
        </g>
        <g fill="none" stroke="#f0008c" strokeLinejoin="round" strokeLinecap="butt">
          <path strokeWidth="11" d="M1638 417L1640 426L1650 440L1653 452" />
          <path strokeWidth="8" d="M1653 452L1656 470L1657 495L1665 525L1668 560" />
          <path strokeWidth="6.5" d="M1668 560L1672 590L1673 615L1675 665L1676 695" />
          <path strokeWidth="3.5" d="M1696 425V445" />
          <path strokeWidth="6.5" d="M1696 445V455L1693 470L1690 490L1684 510L1680 530L1677 555L1675 590L1673 615" />
          <path strokeWidth="6" d="M1676 695L1668 710L1660 730L1656 750L1655 800L1652 830L1648 870L1647 895" />
          <path strokeWidth="5.5" d="M1676 695L1688 740L1693 770L1694 785L1691 810L1689 830L1687 850L1685 880" />
          <path strokeWidth="7" d="M1684 880V893" />
        </g>
      </Scribble>
    </Root>
  );
}
